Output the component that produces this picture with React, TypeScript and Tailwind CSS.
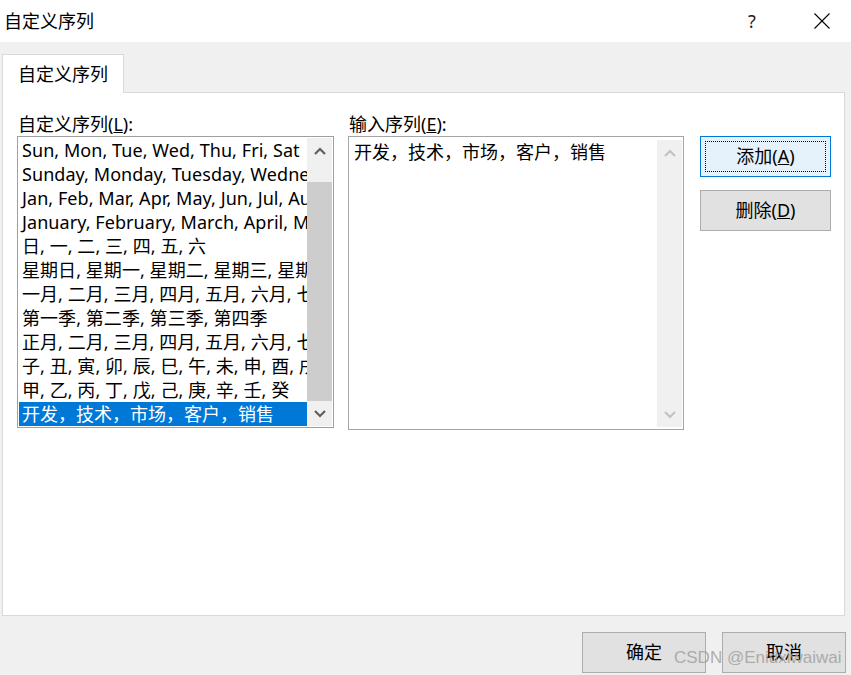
import React from "react";

const FONT = "'Noto Sans', 'Noto Sans CJK SC', sans-serif";

const items = [
  "Sun, Mon, Tue, Wed, Thu, Fri, Sat",
  "Sunday, Monday, Tuesday, Wednesday, Thursday, Friday, Saturday",
  "Jan, Feb, Mar, Apr, May, Jun, Jul, Aug, Sep, Oct, Nov, Dec",
  "January, February, March, April, May, June, July, August, September, October, November, December",
  "日, 一, 二, 三, 四, 五, 六",
  "星期日, 星期一, 星期二, 星期三, 星期四, 星期五, 星期六",
  "一月, 二月, 三月, 四月, 五月, 六月, 七月, 八月, 九月, 十月, 十一月, 十二月",
  "第一季, 第二季, 第三季, 第四季",
  "正月, 二月, 三月, 四月, 五月, 六月, 七月, 八月, 九月, 十月, 冬月, 腊月",
  "子, 丑, 寅, 卯, 辰, 巳, 午, 未, 申, 酉, 戌, 亥",
  "甲, 乙, 丙, 丁, 戊, 己, 庚, 辛, 壬, 癸",
  "开发，技术，市场，客户，销售",
];

function Chevron({ up, color }: { up?: boolean; color: string }) {
  return (
    <svg width="12" height="8" viewBox="0 0 12 8">
      {up ? (
        <polyline points="1,7 6,2 11,7" fill="none" stroke={color} strokeWidth="2.2" />
      ) : (
        <polyline points="1,1 6,6 11,1" fill="none" stroke={color} strokeWidth="2.2" />
      )}
    </svg>
  );
}

export default function App() {
  return (
    <div
      className="relative w-[851px] h-[675px] flex flex-col bg-[#f0f0f0] text-black overflow-hidden"
      style={{ fontFamily: FONT }}
    >
      {/* Title bar */}
      <div className="h-[42px] bg-white flex items-center shrink-0">
        <div className="pl-[4px] text-[18px] leading-[24px] flex-1">自定义序列</div>
        <div className="w-[40px] text-center text-[18px] leading-[24px] mr-[35px] text-[#222]">?</div>
        <div className="w-[30px] flex items-center justify-center mr-[14px]">
          <svg width="16" height="16" viewBox="0 0 16 16">
            <line x1="0.5" y1="0.5" x2="15.5" y2="15.5" stroke="#000" strokeWidth="1.1" />
            <line x1="15.5" y1="0.5" x2="0.5" y2="15.5" stroke="#000" strokeWidth="1.1" />
          </svg>
        </div>
      </div>

      {/* Body */}
      <div className="flex flex-col pl-[2px] pt-[12px]">
        {/* Tab */}
        <div className="flex">
          <div className="relative z-10 -mb-px w-[122px] h-[39px] bg-white border border-b-0 border-[#d9d9d9] flex items-center pl-[15px] text-[18px]">
            自定义序列
          </div>
        </div>
        {/* Panel */}
        <div className="w-[843px] h-[524px] bg-white border border-[#d9d9d9] flex pl-[14px] pt-[19px]">
          {/* Left column */}
          <div className="w-[317px] flex flex-col">
            <div className="h-[24px] leading-[24px] text-[18px] pl-[1px]">
              自定义序列(<span className="underline">L</span>):
            </div>
            <div className="w-[317px] h-[292px] border border-[#a0a0a0] p-[1px] flex">
              <div className="flex-1 flex flex-col overflow-hidden">
                {items.map((t, i) => (
                  <div
                    key={i}
                    className={
                      i === items.length - 1
                        ? "h-[24px] leading-[24px] text-[18px] pl-[3px] whitespace-nowrap overflow-hidden bg-[#0078d7] text-white"
                        : "h-[24px] leading-[24px] text-[18px] pl-[3px] whitespace-nowrap overflow-hidden tracking-[0.06px]"
                    }
                  >
                    {t}
                  </div>
                ))}
              </div>
              <div className="w-[25px] bg-[#f0f0f0] flex flex-col">
                <div className="h-[25px] flex items-center justify-center">
                  <Chevron up color="#606060" />
                </div>
                <div className="flex-1 flex flex-col pt-[19px]">
                  <div className="flex-1 bg-[#cdcdcd]" />
                </div>
                <div className="h-[25px] flex items-center justify-center">
                  <Chevron color="#606060" />
                </div>
              </div>
            </div>
          </div>

          {/* Middle column */}
          <div className="w-[336px] ml-[14px] flex flex-col">
            <div className="h-[24px] leading-[24px] text-[18px] pl-[1px]">
              输入序列(<span className="underline">E</span>):
            </div>
            <div className="w-[336px] h-[294px] border border-[#a6a6a6] flex pl-[5px] pr-[1px] pt-[3px] pb-[2px]">
              <div className="flex-1 text-[18px] leading-[24px] whitespace-nowrap">开发，技术，市场，客户，销售</div>
              <div className="w-[25px] bg-[#f0f0f0] flex flex-col justify-between">
                <div className="h-[25px] flex items-center justify-center">
                  <Chevron up color="#c2c2c2" />
                </div>
                <div className="h-[25px] flex items-center justify-center">
                  <Chevron color="#c2c2c2" />
                </div>
              </div>
            </div>
          </div>

          {/* Buttons column */}
          <div className="ml-[16px] pt-[24px] flex flex-col gap-[13px]">
            <div className="w-[131px] h-[41px] border border-[#0078d7] bg-[#e5f1fb] p-[4px]">
              <div className="w-full h-full border border-dotted border-black flex items-center justify-center text-[18px]">
                添加(<span className="underline">A</span>)
              </div>
            </div>
            <div className="w-[131px] h-[41px] border border-[#adadad] bg-[#e1e1e1] flex items-center justify-center text-[18px]">
              删除(<span className="underline">D</span>)
            </div>
          </div>
        </div>

        {/* Bottom buttons */}
        <div className="flex justify-end gap-[16px] pr-[5px] pt-[16px]">
          <div className="w-[124px] h-[41px] border border-[#adadad] bg-[#e1e1e1] flex items-center justify-center text-[18px]">
            确定
          </div>
          <div className="w-[124px] h-[41px] border border-[#adadad] bg-[#e1e1e1] flex items-center justify-center text-[18px]">
            取消
          </div>
        </div>
      </div>

      {/* Watermark */}
      <div
        className="absolute left-[674px] top-[647px] text-[17px] leading-[22px] text-[#9e9e9e] opacity-80 whitespace-nowrap"
        style={{ fontFamily: "'Liberation Sans', Arial, sans-serif" }}
      >
        CSDN @Enidxiwaiwai
      </div>
    </div>
  );
}
